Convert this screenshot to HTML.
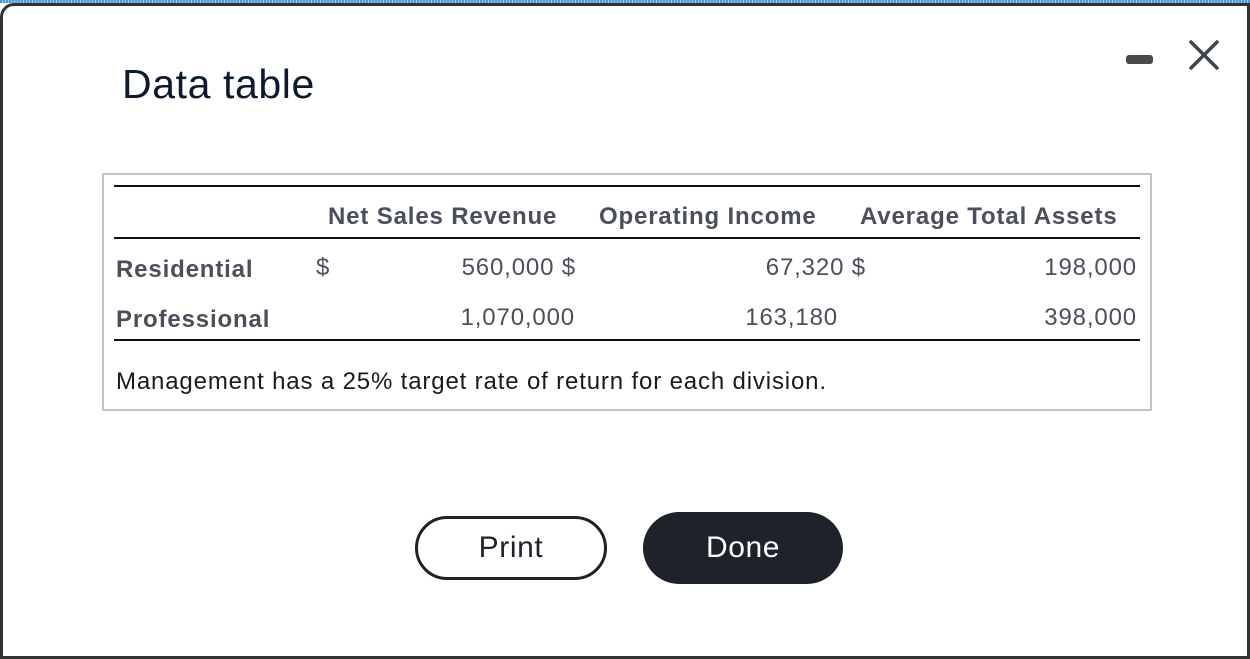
<!DOCTYPE html>
<html><head><style>
body{margin:0;width:1250px;height:658px;overflow:hidden;background:#fff;font-family:"Liberation Sans",Arial,sans-serif;position:relative}
.frame{position:absolute;left:0;top:3px;width:1244px;height:650px;border:3px solid #333;border-radius:14px 0 0 0}
.dots{position:absolute;left:0;top:0;width:1250px;height:3px;background:repeating-linear-gradient(90deg,#4a9ad8 0 2px,#9cc8ee 2px 3px)}
.a{position:absolute;white-space:nowrap}
.h,.t,.b{font-size:24px;letter-spacing:0.85px;color:#4a4f5a}
.h{font-weight:bold;top:203px}
.b{font-weight:bold}
.line{position:absolute;left:114px;width:1026px;height:2px;background:#111}
</style></head><body>
<div class="dots"></div>
<div class="frame"></div>
<div class="a" style="left:122px;top:61px;font-size:41px;letter-spacing:0.6px;color:#0d1a2e">Data table</div>
<div class="a" style="left:1126px;top:55px;width:27px;height:9px;background:#4a4a4a;border-radius:3px"></div>
<svg class="a" style="left:1188px;top:39px" width="32" height="32" viewBox="0 0 32 32"><path d="M3 3L29 29M29 3L3 29" stroke="#3f4753" stroke-width="3.5" stroke-linecap="round"/></svg>
<div class="a" style="left:102px;top:173px;width:1046px;height:234px;border:2px solid #c4c4c4"></div>
<div class="line" style="top:185px"></div>
<div class="line" style="top:237px"></div>
<div class="line" style="top:339px"></div>
<div class="a h" style="left:328px">Net Sales Revenue</div>
<div class="a h" style="left:599px">Operating Income</div>
<div class="a h" style="left:860px">Average Total Assets</div>
<div class="a b" style="left:116px;top:256px">Residential</div>
<div class="a b" style="left:116px;top:306px">Professional</div>
<div class="a t" style="left:316px;top:254px">$</div>
<div class="a t" style="right:674px;top:254px">560,000 $</div>
<div class="a t" style="right:384px;top:254px">67,320 $</div>
<div class="a t" style="right:113px;top:254px">198,000</div>
<div class="a t" style="right:675px;top:304px">1,070,000</div>
<div class="a t" style="right:412px;top:304px">163,180</div>
<div class="a t" style="right:113px;top:304px">398,000</div>
<div class="a t" style="left:116px;top:368px;color:#1a1a1a">Management has a 25% target rate of return for each division.</div>
<div class="a" style="left:415px;top:516px;width:186px;height:58px;border:3px solid #1e222b;border-radius:32px;text-align:center;line-height:58px;font-size:30px;letter-spacing:0.6px;color:#1e222b">Print</div>
<div class="a" style="left:643px;top:512px;width:200px;height:72px;background:#1e222b;border-radius:36px;text-align:center;line-height:72px;font-size:30px;letter-spacing:0.6px;color:#fff">Done</div>
</body></html>
